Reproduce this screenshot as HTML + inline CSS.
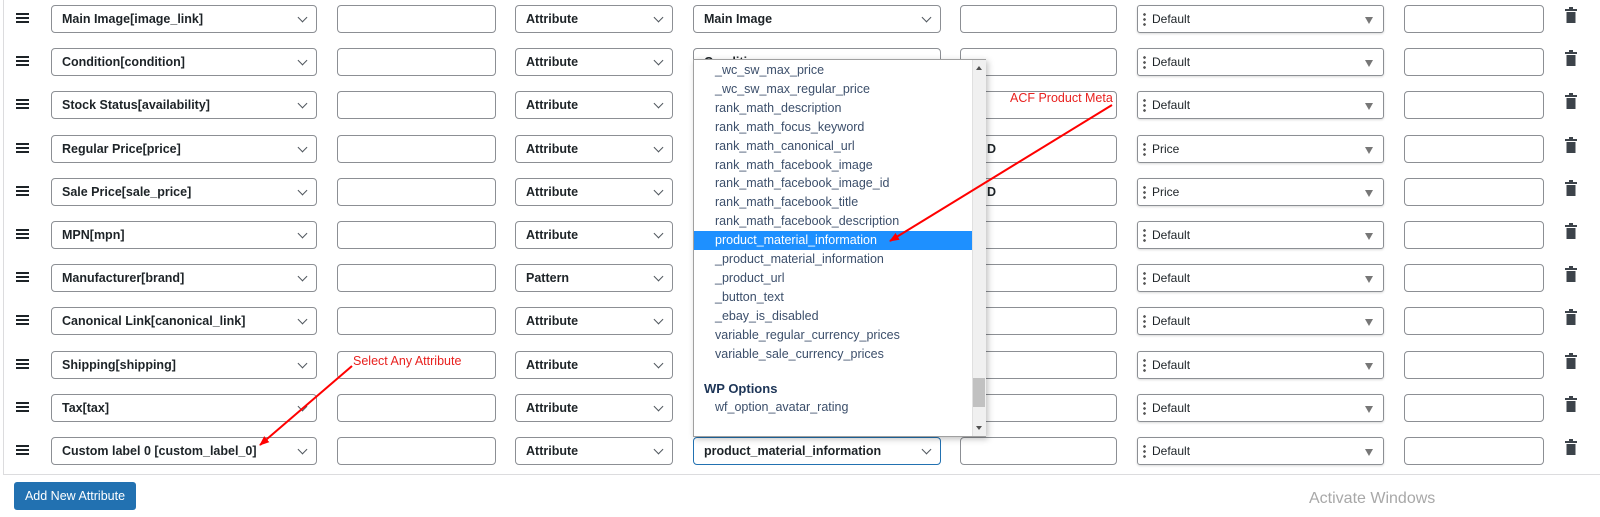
<!DOCTYPE html>
<html><head><meta charset="utf-8"><style>
*{box-sizing:border-box;margin:0;padding:0}
body{width:1600px;height:517px;background:#fff;position:relative;overflow:hidden;font-family:"Liberation Sans",sans-serif;color:#1d2327}
.a{position:absolute}
.f{position:absolute;height:28px;border:1px solid #8c8f94;border-radius:4px;background:#fff;font-size:12.5px;font-weight:bold;line-height:26px;padding-left:10px;white-space:nowrap;overflow:hidden}
.f .ch{position:absolute;right:10px;top:8px;width:7px;height:7px;border-right:1.3px solid #50575e;border-bottom:1.3px solid #50575e;transform:rotate(45deg)}
.d{position:absolute;height:28px;border:1px solid #8c8f94;border-radius:3px;background:#fff;font-size:12px;line-height:26px;padding-left:14px;box-shadow:0 1px 2px rgba(0,0,0,.15)}
.d .dots{position:absolute;left:5px;top:6px;width:3px;height:15px;background:radial-gradient(circle,#555 1.2px,transparent 1.5px) 0 0/3px 5px repeat-y}
.d .tri{position:absolute;right:10px;top:11px;border-left:4px solid transparent;border-right:4px solid transparent;border-top:7px solid #777}
.hb{position:absolute;left:16px;width:13px;height:10px;border-top:2px solid #1d2327;border-bottom:2px solid #1d2327}
.hb:after{content:"";position:absolute;left:0;right:0;top:2px;height:2px;background:#1d2327}
.tr{position:absolute;left:1565px;width:12px;height:16px}
.dd{position:absolute;left:693px;top:59px;width:293px;height:378px;background:#fff;border:1px solid #a0a0a0;box-shadow:2px 2px 6px rgba(0,0,0,.25);font-size:12.5px;color:#3c4f6b}
.dd div.i{position:absolute;left:21px;white-space:nowrap}
</style></head><body>
<div class="a" style="left:3px;top:0;width:1px;height:474px;background:#dcdcde"></div>
<div class="a" style="left:3px;top:474px;width:1597px;height:1px;background:#dcdcde"></div>
<div id="rows"></div>
<script>
var L=[["Main Image[image_link]","Attribute","Main Image","Default",""],["Condition[condition]","Attribute","Condition","Default",""],["Stock Status[availability]","Attribute","","Default",""],["Regular Price[price]","Attribute","","Price","D"],["Sale Price[sale_price]","Attribute","","Price","D"],["MPN[mpn]","Attribute","","Default",""],["Manufacturer[brand]","Pattern","","Default",""],["Canonical Link[canonical_link]","Attribute","","Default",""],["Shipping[shipping]","Attribute","","Default",""],["Tax[tax]","Attribute","","Default",""],["Custom label 0 [custom_label_0]","Attribute","product_material_information","Default",""]];
var h="";
L.forEach(function(r,i){var t=Math.round(5+i*43.2);
h+='<div class="hb" style="top:'+(t+8)+'px"></div>';
h+='<div class="f" style="left:51px;top:'+t+'px;width:266px">'+r[0]+'<span class="ch"></span></div>';
h+='<div class="f" style="left:337px;top:'+t+'px;width:159px"></div>';
h+='<div class="f" style="left:515px;top:'+t+'px;width:158px">'+r[1]+'<span class="ch"></span></div>';
h+='<div class="f" style="left:693px;top:'+t+'px;width:248px;'+(i==10?'border-color:#2271b1;':'')+'">'+r[2]+'<span class="ch"></span></div>';
h+='<div class="f" style="left:960px;top:'+t+'px;width:157px;padding-left:26px">'+r[4]+'</div>';
h+='<div class="d" style="left:1137px;top:'+t+'px;width:247px"><span class="dots"></span>'+r[3]+'<span class="tri"></span></div>';
h+='<div class="f" style="left:1404px;top:'+t+'px;width:140px"></div>';
h+='<svg class="tr" style="top:'+(t+2)+'px" viewBox="0 0 12 16"><rect x="4" y="0" width="4" height="2" fill="#3c434a"/><rect x="0" y="2" width="12" height="2" fill="#3c434a"/><rect x="1.5" y="5" width="9" height="11" fill="#3c434a"/></svg>';
});
document.getElementById("rows").innerHTML=h;
</script>
<div class="dd">
<div style="position:absolute;left:278px;top:0;width:14px;height:376px;background:#f0f0f0;border-left:1px solid #e0e0e0"></div>
<div style="position:absolute;left:279px;top:318px;width:12px;height:29px;background:#c1c1c1"></div>
<div style="position:absolute;left:282px;top:6px;border-left:3px solid transparent;border-right:3px solid transparent;border-bottom:4px solid #505050"></div>
<div style="position:absolute;left:282px;top:366px;border-left:3px solid transparent;border-right:3px solid transparent;border-top:4px solid #505050"></div>
<div style="position:absolute;left:0;top:171px;width:278px;height:19px;background:#1e90ff"></div>
<div id="items"></div>
<div class="i" style="left:10px;top:321px;font-weight:bold;font-size:13px;color:#1d3557">WP Options</div>
<div class="i" style="top:340px">wf_option_avatar_rating</div>
</div>
<script>
var it=["_wc_sw_max_price","_wc_sw_max_regular_price","rank_math_description","rank_math_focus_keyword","rank_math_canonical_url","rank_math_facebook_image","rank_math_facebook_image_id","rank_math_facebook_title","rank_math_facebook_description","product_material_information","_product_material_information","_product_url","_button_text","_ebay_is_disabled","variable_regular_currency_prices","variable_sale_currency_prices"];
var s="";it.forEach(function(x,i){s+='<div class="i" style="top:'+(3+i*18.9)+'px;'+(i==9?'color:#fff':'')+'">'+x+'</div>'});
document.getElementById("items").innerHTML=s;
</script>
<div class="a" style="left:1010px;top:91px;font-family:'Liberation Sans Narrow','Liberation Sans',sans-serif;font-size:12.5px;color:#e8211f">ACF Product Meta</div>
<div class="a" style="left:353px;top:354px;font-family:'Liberation Sans Narrow','Liberation Sans',sans-serif;font-size:12.5px;color:#e8211f">Select Any Attribute</div>
<svg class="a" style="left:0;top:0" width="1600" height="517">
<defs><marker id="m" markerWidth="10" markerHeight="8" refX="9" refY="4" orient="auto" markerUnits="userSpaceOnUse"><path d="M0,0 L10,4 L0,8z" fill="#f00"/></marker></defs>
<line x1="1112" y1="105" x2="890" y2="241" stroke="#f00" stroke-width="2" marker-end="url(#m)"/>
<line x1="352" y1="366" x2="260" y2="445" stroke="#f00" stroke-width="2" marker-end="url(#m)"/>
</svg>
<div class="a" style="left:14px;top:482px;width:122px;height:28px;background:#2271b1;border-radius:3px;color:#fff;font-size:12.5px;line-height:28px;text-align:center">Add New Attribute</div>
<div class="a" style="left:1309px;top:490px;font-size:16px;color:#a8a8a8">Activate Windows</div>
</body></html>
